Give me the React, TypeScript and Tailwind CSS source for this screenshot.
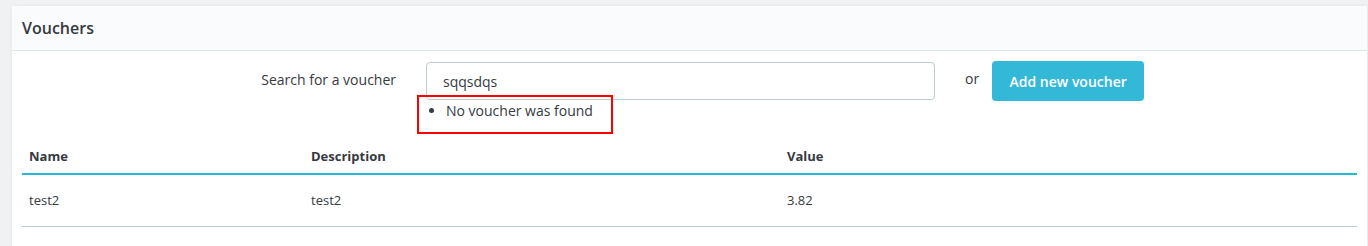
export default function App() {
    const rows = [{ name: 'test2', description: 'test2', value: '3.82' }];

    return (
        <div className="h-[246px] overflow-hidden bg-[#eff1f2] pl-[12px] pt-[6px] pr-[1px] font-['Open_Sans',sans-serif] text-[#363a41]">
            <div className="h-full rounded-tl-[5px] bg-white shadow-[0_0_4px_0_rgba(0,0,0,0.06)]">
                <div className="flex h-[45px] items-center border-b border-[#dbe6e9] bg-[#fafbfc] px-[10px] pb-[1px] text-[16px] font-semibold">
                    Vouchers
                </div>

                <div className="px-[10px] pt-[11px]">
                    <div className="flex items-start">
                        <label className="w-[374px] pt-[8px] text-right text-[14px] leading-[20px]">Search for a voucher</label>
                        <div className="relative ml-[30px] w-[509px]">
                            <input
                                className="h-[38px] w-full rounded-[4px] border border-[#bbcdd2] px-[16px] text-[14px] text-[#363a41] outline-none"
                                defaultValue="sqqsdqs"
                                readOnly
                            />
                            <ul className="mt-[1px] list-disc pl-[20px] text-[14px] leading-[20px] marker:text-[#363a41]">
                                <li>No voucher was found</li>
                            </ul>
                            <div className="absolute left-[-9px] top-[33px] h-[39px] w-[196px] border-2 border-[#ff0000]" />
                        </div>
                        <span className="ml-[30px] pt-[7px] text-[14px] leading-[20px] text-[#363a41]">or</span>
                        <button className="-mt-[1px] ml-[13px] h-[40px] w-[152px] rounded-[4px] bg-[#34b8d8] text-[14px] font-semibold text-white">
                            Add new voucher
                        </button>
                    </div>

                    <table className="mt-[18px] w-full text-left text-[13px]">
                        <thead>
                            <tr className="border-b-2 border-[#25b9d7]">
                                <th className="h-[35px] w-[282px] px-[7px] pt-[1px] font-bold">Name</th>
                                <th className="w-[476px] px-[7px] pt-[1px] font-bold">Description</th>
                                <th className="px-[7px] pt-[1px] font-bold">Value</th>
                            </tr>
                        </thead>
                        <tbody>
                            {rows.map(row => (
                                <tr key={row.name} className="border-b border-[#bbcdd2]">
                                    <td className="h-[52px] px-[7px]">{row.name}</td>
                                    <td className="px-[7px]">{row.description}</td>
                                    <td className="px-[7px]">{row.value}</td>
                                </tr>
                            ))}
                        </tbody>
                    </table>
                </div>
            </div>
        </div>
    );
}
